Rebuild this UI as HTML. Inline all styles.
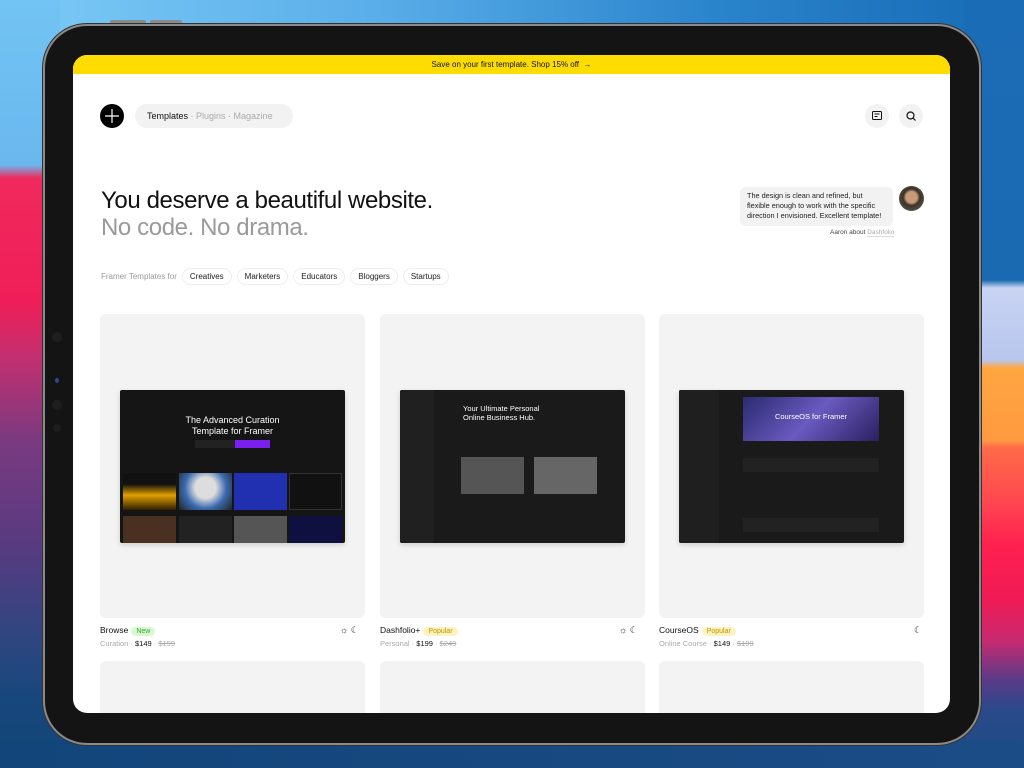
<!DOCTYPE html>
<html><head><meta charset="utf-8">
<style>
*{margin:0;padding:0;box-sizing:border-box}
body{width:1024px;height:768px;overflow:hidden;position:relative;font-family:"Liberation Sans",sans-serif;background:#1b4a82}
.bgt{position:absolute;left:0;top:0;width:1024px;height:300px;background:linear-gradient(90deg,#7ccaf6 0%,#5cb0ea 35%,#2a84cc 70%,#166ab4 100%)}
.bgl{position:absolute;left:0;top:0;width:60px;height:768px;background:linear-gradient(180deg,#72c4f4 0px,#6ab8ee 165px,#f02a5c 178px,#f01e58 300px,#c03070 360px,#7a3a80 440px,#5a3a80 540px,#2e4680 640px,#17477c 700px,#124576 768px)}
.bgr{position:absolute;left:965px;top:0;width:59px;height:768px;background:linear-gradient(180deg,#1b6cb6 0px,#1a6ab2 280px,#c9d4f2 288px,#b8c6ee 360px,#ffa640 368px,#ff9a40 440px,#ff6a48 448px,#ff4850 500px,#ff2050 545px,#f01a55 600px,#c82a70 640px,#5a3a88 680px,#2a4a8a 710px,#1d4a85 768px)}
.bgb{position:absolute;left:0;top:740px;width:1024px;height:28px;background:linear-gradient(90deg,#12457a,#1c4c86)}
.frame{position:absolute;left:43px;top:24px;width:938px;height:721px;border-radius:44px;background:#141414;border:2px solid #8a8a8a;box-shadow:0 0 0 1px #333}
.btn{position:absolute;top:20px;height:4px;background:#8a8a8a;border-radius:2px}
.screen{position:absolute;left:73px;top:55px;width:877px;height:658px;border-radius:14px;background:#fff;overflow:hidden}
.bar{height:19px;background:#ffdc00;font-size:8px;text-align:center;line-height:19px;color:#111}
.logo{position:absolute;left:27px;top:49px;width:24px;height:24px;border-radius:50%;background:#000}
.nav{position:absolute;left:62px;top:49px;width:158px;height:24px;border-radius:12px;background:#f2f2f2;font-size:9px;line-height:24px;padding-left:12px;color:#aaa}
.nav b{font-weight:normal;color:#111}
.ib{position:absolute;top:49px;width:24px;height:24px;border-radius:50%;background:#f2f2f2}
h1{position:absolute;left:28px;top:132px;font-size:24px;font-weight:normal;letter-spacing:-.4px;line-height:27px;color:#111}
h1 span{color:#9a9a9a}
.quote{position:absolute;left:667px;top:132px;width:153px;height:39px;border-radius:6px;background:#f2f2f2;font-size:7.3px;line-height:10px;padding:4px 7px;color:#222}
.av{position:absolute;left:826px;top:131px;width:25px;height:25px;border-radius:50%;background:radial-gradient(circle at 50% 45%,#c89a78 0 30%,#3a3328 45%,#6a6a60 100%)}
.by{position:absolute;left:757px;top:174px;font-size:6.5px;color:#444}
.by u{color:#aaa;text-decoration:none;border-bottom:1px solid #ddd}
.tags{position:absolute;left:28px;top:213px;font-size:8px;color:#999;display:flex;align-items:center;gap:5px}
.tags i{font-style:normal;color:#222;border:1px solid #eee;border-radius:9px;padding:3px 7px}
.card{position:absolute;top:259px;width:265px;height:304px;background:#f3f3f3;border-radius:6px}
.shot{position:absolute;top:76px;left:20px;width:225px;height:153px;background:#151515;border-radius:2px;box-shadow:0 2px 6px rgba(0,0,0,.15);overflow:hidden}
.meta{position:absolute;top:570px;font-size:8.5px;color:#111}
.meta .s{font-size:7.5px;color:#aaa;margin-top:3px}
.meta .s b{font-weight:normal;color:#111}
.meta .s del{color:#aaa}
.pill{display:inline-block;font-size:7px;padding:1px 5px;border-radius:7px;margin-left:3px}
.ico{position:absolute;top:570px;font-size:9px;color:#222}
.card2{position:absolute;top:606px;width:265px;height:60px;background:#f3f3f3;border-radius:6px}
</style></head><body>
<div class="bgt"></div><div class="bgl"></div><div class="bgr"></div><div class="bgb"></div>
<div class="btn" style="left:110px;width:36px"></div><div class="btn" style="left:150px;width:32px"></div>
<div class="frame"></div>
<div style="position:absolute;left:52px;top:332px;width:10px;height:10px;border-radius:50%;background:#1e1e1e"></div>
<div style="position:absolute;left:55px;top:378px;width:4px;height:5px;border-radius:50%;background:#2b4a90"></div>
<div style="position:absolute;left:52px;top:400px;width:10px;height:10px;border-radius:50%;background:#1e1e1e"></div>
<div style="position:absolute;left:53px;top:424px;width:8px;height:8px;border-radius:50%;background:#1e1e1e"></div>
<div class="screen">
<div class="bar">Save on your first template. Shop 15% off &nbsp;→</div>
<div class="logo"><svg width="24" height="24"><path d="M12 5v14M5 12h14" stroke="#fff" stroke-width="1.2"/></svg></div>
<div class="nav"><b>Templates</b> · Plugins · Magazine</div>
<div class="ib" style="left:792px"><svg width="24" height="24"><rect x="7.5" y="7.5" width="9" height="8" rx="1" fill="none" stroke="#111" stroke-width="1"/><path d="M9.5 10h5M9.5 12.5h3" stroke="#111"/></svg></div>
<div class="ib" style="left:826px"><svg width="24" height="24"><circle cx="11.5" cy="11.5" r="3.5" fill="none" stroke="#111" stroke-width="1.2"/><path d="M14 14l2.5 2.5" stroke="#111" stroke-width="1.2"/></svg></div>
<h1>You deserve a beautiful website.<br><span>No code. No drama.</span></h1>
<div class="quote">The design is clean and refined, but flexible enough to work with the specific direction I envisioned. Excellent template!</div>
<div class="av"></div>
<div class="by">Aaron about <u>Dashfolio</u></div>
<div class="tags">Framer Templates for <i>Creatives</i><i>Marketers</i><i>Educators</i><i>Bloggers</i><i>Startups</i></div>

<div class="card" style="left:27px"><div class="shot">
<div style="color:#fff;font-size:9px;text-align:center;margin-top:25px;line-height:11px">The Advanced Curation<br>Template for Framer</div>
<div style="position:absolute;left:75px;top:50px;width:40px;height:8px;background:#222"></div>
<div style="position:absolute;left:115px;top:50px;width:35px;height:8px;background:#7a1ff0"></div>
<div style="position:absolute;left:3px;top:83px;width:53px;height:37px;background:linear-gradient(#111 30%,#e0a000 60%,#302000)"></div>
<div style="position:absolute;left:59px;top:83px;width:53px;height:37px;background:radial-gradient(circle at 50% 40%,#ddd 30%,#3a6ab0 60%,#222)"></div>
<div style="position:absolute;left:114px;top:83px;width:53px;height:37px;background:#2030b0"></div>
<div style="position:absolute;left:169px;top:83px;width:53px;height:37px;background:#111;border:1px solid #333"></div>
<div style="position:absolute;left:3px;top:126px;width:53px;height:27px;background:#4a3020"></div>
<div style="position:absolute;left:59px;top:126px;width:53px;height:27px;background:#222"></div>
<div style="position:absolute;left:114px;top:126px;width:53px;height:27px;background:#555"></div>
<div style="position:absolute;left:169px;top:126px;width:53px;height:27px;background:#101040"></div>
</div></div>
<div class="card" style="left:307px"><div class="shot" style="background:#1a1a1a">
<div style="position:absolute;left:0;top:0;width:34px;height:153px;background:#202020"></div>
<div style="position:absolute;left:63px;top:14px;color:#fff;font-size:7.5px;line-height:9px">Your Ultimate Personal<br>Online Business Hub.</div>
<div style="position:absolute;left:61px;top:67px;width:63px;height:37px;background:#555"></div>
<div style="position:absolute;left:134px;top:67px;width:63px;height:37px;background:#666"></div>
</div></div>
<div class="card" style="left:586px"><div class="shot" style="background:#1a1a1a">
<div style="position:absolute;left:0;top:0;width:40px;height:153px;background:#1f1f1f"></div>
<div style="position:absolute;left:64px;top:7px;width:136px;height:44px;background:linear-gradient(135deg,#2a2a70,#6a5ac0 50%,#2a2060);color:#fff;font-size:7.5px;text-align:center;line-height:40px">CourseOS for Framer</div>
<div style="position:absolute;left:64px;top:68px;width:136px;height:14px;background:#222"></div>
<div style="position:absolute;left:64px;top:128px;width:136px;height:14px;background:#222"></div>
</div></div>

<div class="meta" style="left:27px">Browse<span class="pill" style="background:#d8f8d0;color:#3a3">New</span><div class="s">Curation · <b>$149</b> · <del>$199</del></div></div>
<div class="ico" style="left:267px">☼ ☾</div>
<div class="meta" style="left:307px">Dashfolio+<span class="pill" style="background:#fdf2c0;color:#b90">Popular</span><div class="s">Personal · <b>$199</b> · <del>$249</del></div></div>
<div class="ico" style="left:546px">☼ ☾</div>
<div class="meta" style="left:586px">CourseOS<span class="pill" style="background:#fdf2c0;color:#b90">Popular</span><div class="s">Online Course · <b>$149</b> · <del>$199</del></div></div>
<div class="ico" style="left:841px">☾</div>
<div class="card2" style="left:27px"></div><div class="card2" style="left:307px"></div><div class="card2" style="left:586px"></div>
</div>
</body></html>
